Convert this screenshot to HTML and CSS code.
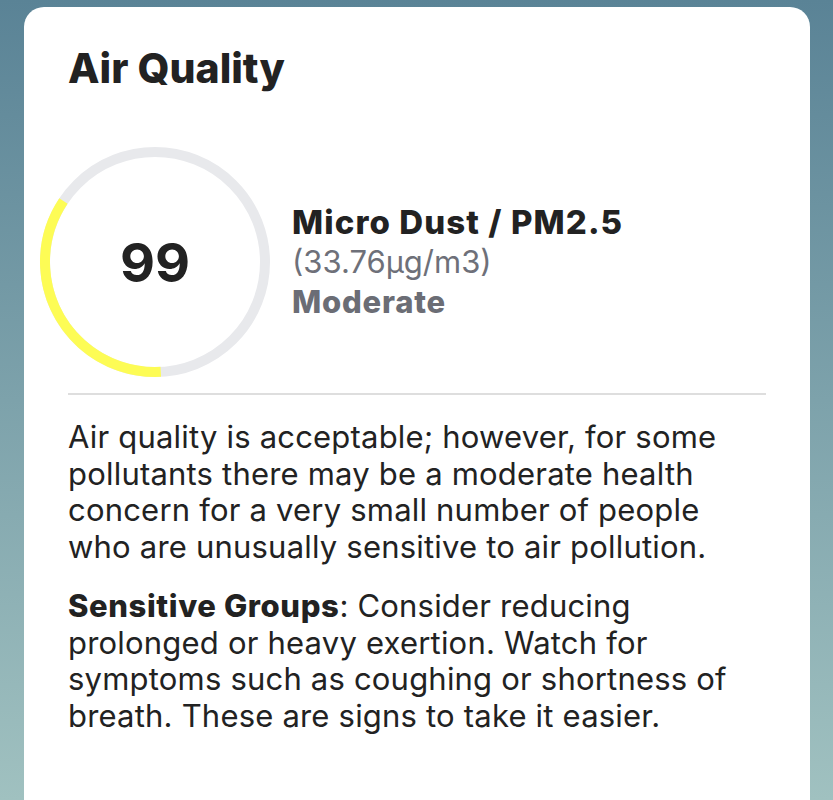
FILE: index.html
```html
<!doctype html>
<html>

<head>
    <meta charset="utf-8">
    <meta name="viewport" content="width=device-width, initial-scale=1.0">
    <title>Air Quality</title>
    <link rel="stylesheet" href="styles.css">
</head>

<body>
    <div class="card">
        <h2 class="card-title">Air Quality</h2>

        <!-- Gauge + pollutant -->
        <div class="aqi-row">
            <div class="gauge">
                <svg width="232" height="232" viewBox="0 0 232 232">
                    <circle class="gauge-track" cx="116" cy="116" r="110"></circle>
                    <circle class="gauge-value" cx="116" cy="116" r="110"
                        stroke-dasharray="243 700" transform="rotate(87 116 116)"></circle>
                </svg>
                <div class="gauge-number">99</div>
            </div>

            <div class="pollutant">
                <div class="pollutant-name">Micro Dust / PM2.5</div>
                <div class="pollutant-amount">(33.76µg/m3)</div>
                <div class="pollutant-level">Moderate</div>
            </div>
        </div>

        <hr class="divider">

        <p class="desc">Air quality is acceptable; however, for some pollutants there may be a moderate health concern for a very small number of people who are unusually sensitive to air pollution.</p>

        <p class="desc"><b>Sensitive Groups</b>: Consider reducing prolonged or heavy exertion. Watch for symptoms such as coughing or shortness of breath. These are signs to take it easier.</p>
    </div>
</body>

</html>
```

FILE: styles.css
```css
body {
    font-family: Inter, "Noto Sans", sans-serif;
    margin: 0;
    padding: 0;
    height: 800px;
    background: linear-gradient(#5a8396, #a0c1c0);
    overflow: hidden;
}

.card {
    background-color: #fff;
    margin: 7px 23px 0 24px;
    padding: 37px 44px 60px;
    border-radius: 20px;
    min-height: 800px;
    color: #222;
}

.card-title {
    font-size: 41px;
    font-weight: 800;
    margin: 0;
    line-height: 48px;
}

.aqi-row {
    display: flex;
    align-items: center;
    gap: 21px;
    margin: 54px 0 0 -29px;
}

.gauge {
    position: relative;
    width: 232px;
    height: 232px;
    flex-shrink: 0;
}

.gauge svg {
    display: block;
}

.gauge-track {
    fill: none;
    stroke: #e8e9ec;
    stroke-width: 10;
}

.gauge-value {
    fill: none;
    stroke: #fdfc55;
    stroke-width: 10;
}

.gauge-number {
    position: absolute;
    top: 0;
    left: 0;
    right: 0;
    bottom: 0;
    display: flex;
    justify-content: center;
    align-items: center;
    font-size: 54px;
    font-weight: 700;
}

.pollutant {
    font-size: 31px;
    line-height: 40px;
}

.pollutant-name {
    font-size: 33px;
    font-weight: 800;
    letter-spacing: 1.1px;
}

.pollutant-amount {
    color: #6e7079;
}

.pollutant-level {
    color: #6b6d75;
    font-weight: 800;
    letter-spacing: 0.8px;
}

.divider {
    border: 0;
    border-top: 2px solid #dedede;
    margin: 15px 0 0;
}

.desc {
    font-size: 31px;
    line-height: 36.7px;
    letter-spacing: 0.2px;
    margin: 24px 0 0;
}

.desc + .desc {
    margin-top: 22px;
}

.desc b {
    font-weight: 800;
    letter-spacing: 0.6px;
}
```
